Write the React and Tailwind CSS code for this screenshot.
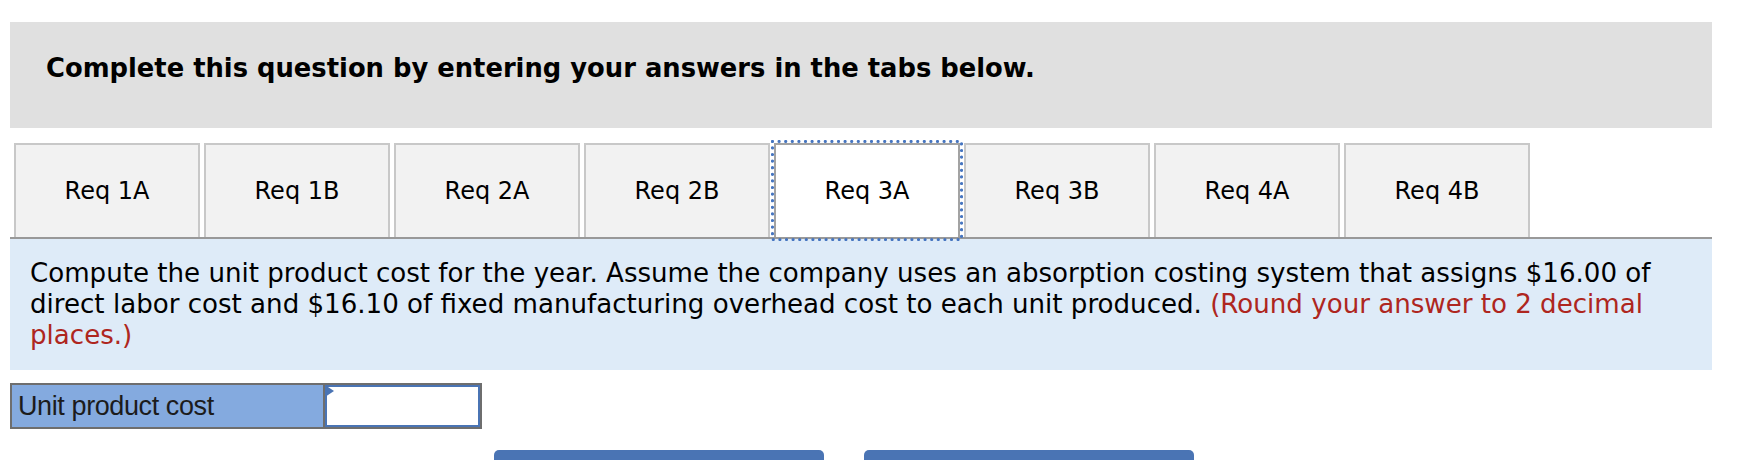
import React from 'react';

const tabs = ['Req 1A', 'Req 1B', 'Req 2A', 'Req 2B', 'Req 3A', 'Req 3B', 'Req 4A', 'Req 4B'];

const Tab = ({ label, active }) => {
  if (active) {
    return (
      <div className="relative w-[186px] h-[94px]">
        <div className="w-full h-full bg-white border-2 border-b-0 border-[#a3a3a3] flex items-center justify-center">
          {label}
        </div>
        {/* focus ring */}
        <svg className="absolute -left-[3px] -top-[3px] w-[192px] h-[101px] pointer-events-none" viewBox="0 0 192 101">
          <rect
            x="1.5"
            y="1.5"
            width="189"
            height="98"
            fill="none"
            stroke="#4675c0"
            strokeWidth="3.2"
            strokeDasharray="0 6.6"
            strokeLinecap="round"
          />
        </svg>
      </div>
    );
  }
  return (
    <div className="w-[186px] h-[94px] bg-[#f2f2f2] border-2 border-b-0 border-[#c8c8c8] flex items-center justify-center">
      {label}
    </div>
  );
};

export default function App() {
  return (
    <div className="w-[1746px] h-[460px] overflow-hidden bg-white pt-[22px] pl-[10px] text-black font-['DejaVu_Sans',Verdana,sans-serif]">
      <div className="w-[1702px]">
        <div className="h-[106px] bg-[#e0e0e0] pl-[36px] pt-[30px]">
          <h2 className="text-[25.8px] font-bold leading-[32px]">
            Complete this question by entering your answers in the tabs below.
          </h2>
        </div>

        <div className="mt-[15px] pl-[4px] flex gap-[4px] border-b-2 border-[#999999] text-[24px]">
          {tabs.map((t) => (
            <Tab key={t} label={t} active={t === 'Req 3A'} />
          ))}
        </div>

        <div className="bg-[#deebf8] pl-[20px] pr-[30px] pt-[19px] pb-[19px] text-[26.1px] leading-[31px]">
          Compute the unit product cost for the year. Assume the company uses an absorption costing system that
          assigns $16.00 of direct labor cost and $16.10 of fixed manufacturing overhead cost to each unit
          produced. <span className="text-[#ae2620]">(Round your answer to 2 decimal places.)</span>
        </div>

        <div className="mt-[13px] w-[472px] h-[46px] flex border-2 border-[#6e6e6e]">
          <div className="w-[313px] h-full bg-[#84aadf] border-r-2 border-[#6e6e6e] flex items-center pl-[6px] font-['Liberation_Sans',Arial,sans-serif] text-[27px] tracking-[-0.4px] text-[#1c1c1c]">
            Unit product cost
          </div>
          <div className="relative flex-1 h-full bg-white border-2 border-[#4a74b4]">
            <svg className="absolute -left-[2px] -top-[2px] w-[10px] h-[12px]" viewBox="0 0 10 12">
              <polygon points="0,0 9,6 0,12" fill="#4a74b4" />
            </svg>
          </div>
        </div>

        <div className="mt-[21px] flex gap-[40px] pl-[484px]">
          <button aria-label="Previous" className="w-[330px] h-[44px] bg-[#4a74b4] rounded-t-[5px]" />
          <button aria-label="Next" className="w-[330px] h-[44px] bg-[#4a74b4] rounded-t-[5px]" />
        </div>
      </div>
    </div>
  );
}
